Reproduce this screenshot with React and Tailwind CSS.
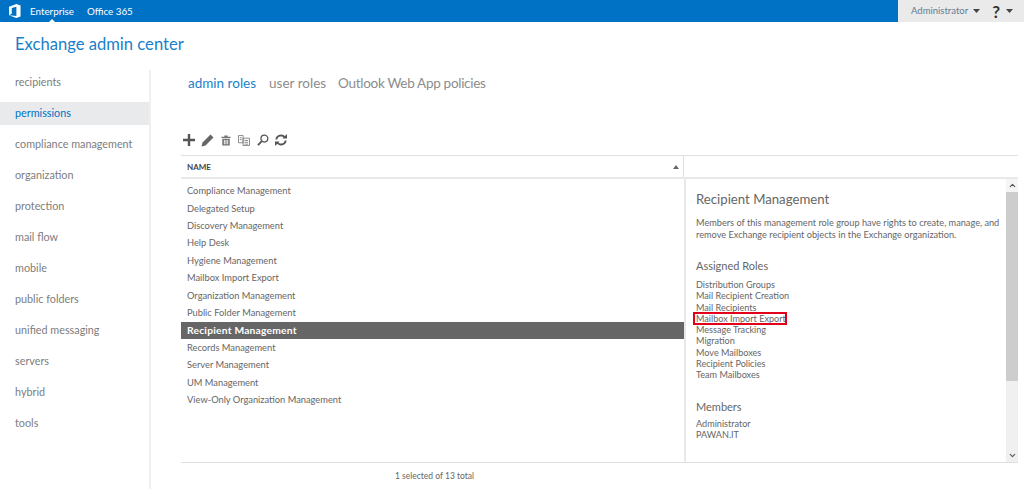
import React from 'react';
import { ChevronUp, ChevronDown } from 'lucide-react';

const navItems = [
  'recipients', 'permissions', 'compliance management', 'organization', 'protection', 'mail flow',
  'mobile', 'public folders', 'unified messaging', 'servers', 'hybrid', 'tools',
];

const roleGroups = [
  'Compliance Management', 'Delegated Setup', 'Discovery Management', 'Help Desk', 'Hygiene Management',
  'Mailbox Import Export', 'Organization Management', 'Public Folder Management', 'Recipient Management',
  'Records Management', 'Server Management', 'UM Management', 'View-Only Organization Management',
];

const assignedRoles = [
  'Distribution Groups', 'Mail Recipient Creation', 'Mail Recipients', 'Mailbox Import Export',
  'Message Tracking', 'Migration', 'Move Mailboxes', 'Recipient Policies', 'Team Mailboxes',
];

const Caret = ({ className }) => (
  <svg width="7" height="4" viewBox="0 0 7 4" className={className}>
    <path d="M0 0h7L3.5 4z" fill="currentColor" />
  </svg>
);

const Toolbar = () => (
  <div className="h-[30px] flex items-center gap-[6px] pl-[2px] text-[#555]">
    {/* add */}
    <svg width="12" height="12" viewBox="0 0 12 12"><path d="M4.8 0h2.4v4.8H12v2.4H7.2V12H4.8V7.2H0V4.8h4.8z" fill="currentColor" /></svg>
    {/* edit */}
    <svg width="13" height="13" viewBox="0 0 13 13" className="text-[#666]"><path d="M9.5 0.5l3 3-8 8-4 1 1-4z" fill="currentColor" /></svg>
    {/* delete */}
    <svg width="10" height="11" viewBox="0 0 12 12" className="ml-[1px] text-[#777]"><path d="M4 0h4v1.5h3.5V3H.5V1.5H4zM1.500 4h9v8h-9zM3.500 5.500v5h1v-5zM5.500 5.500v5h1v-5zM7.500 5.500v5h1v-5z" fill="currentColor" fillRule="evenodd" /></svg>
    {/* copy */}
    <svg width="12" height="11" viewBox="0 0 13 12" fill="none" stroke="currentColor" strokeWidth="0.9" className="ml-[1px] text-[#777]"><path d="M.5.5h5v8h-5zM5.500 3.500h7v8h-7zM2 3h2M2 5h2M7 6h4M7 8h4M7 10h4" /></svg>
    {/* search */}
    <svg width="12" height="12" viewBox="0 0 13 13" fill="none" stroke="currentColor" className="ml-[1px]"><circle cx="8" cy="5" r="3.7" strokeWidth="1.4" /><path d="M5 8l-4 4" strokeWidth="2" /></svg>
    {/* refresh */}
    <svg width="12" height="12" viewBox="0 0 13 13" fill="none" stroke="currentColor" strokeWidth="2"><path d="M1.500 6A5 4.600 0 0 1 10.500 3.500M11.500 7A5 4.600 0 0 1 2.500 9.500" /><path d="M8 5h5V0zM5 8H0v5z" fill="currentColor" stroke="none" /></svg>
  </div>
);

const App = () => {
  return (
    <div className="w-[1024px] h-[500px] overflow-hidden bg-white text-[#666] font-['Lato','Open_Sans',sans-serif]">
      {/* Top bar */}
      <div className="h-[22px] flex bg-[#0072c6] text-white text-[9.800px]">
        <div className="w-[30px] flex items-center justify-center">
          <svg width="12" height="14" viewBox="0 0 13 15"><path d="M0 3L8 0l4.500 1.500v12L8 15l-8-3 8 1V3L3 4.200v6.300L0 12z" fill="#fff" /></svg>
        </div>
        <div className="relative flex items-center">
          Enterprise
          <span className="absolute bottom-0 left-[19px] border-x-[3px] border-b-[3px] border-x-transparent border-b-white" />
        </div>
        <div className="flex items-center ml-[13px]">Office 365</div>
        <div className="ml-auto w-[126px] bg-[#eaeaea] flex items-center pl-[13px] text-[9.500px] text-[#5f7d95]">
          <span>Administrator</span>
          <Caret className="ml-[5px] text-[#444]" />
          <span className="ml-[12px] text-[17px] font-bold leading-none text-[#333]">?</span>
          <Caret className="ml-[6px] text-[#444]" />
        </div>
      </div>

      <h1 className="h-[48px] pl-[15px] pt-[10px] text-[16.600px] leading-[24px] text-[#1a7fcb]">Exchange admin center</h1>

      <div className="flex h-[419px]">
        {/* Left nav */}
        <div className="w-[151px] shrink-0 pt-[1px] border-r-2 border-[#f0f0f0] text-[10.800px] text-[#7d7d7d]">
          {navItems.map((item) => (
            <div
              key={item}
              className={`h-[23px] mb-[8px] pl-[15px] flex items-center whitespace-nowrap ${item === 'permissions' ? 'bg-[#e9eaec] text-[#0072c6] w-[149px]' : ''}`}
            >
              {item}
            </div>
          ))}
        </div>

        {/* Main */}
        <div className="flex-1 min-w-0 pl-[30px] pr-[6px]">
          <div className="flex gap-[13px] pl-[7px] pt-[1px] h-[55px] text-[13.500px] leading-[24px] text-[#8c8c8c]">
            <span className="text-[#1a7fcb]">admin roles</span>
            <span>user roles</span>
            <span className="tracking-[-0.300px] ml-[-1px]">Outlook Web App policies</span>
          </div>

          <Toolbar />

          <div className="border-y border-[#dde1e4] h-[308px] flex flex-col">
            <div className="h-[23px] shrink-0 flex border-b-2 border-[#e6e8ea]">
              <div className="w-[503px] flex items-center justify-between pl-[6px] pr-[4px] border-r border-[#dde1e4]">
                <span className="text-[8px] font-bold text-[#444]">NAME</span>
                <span className="border-x-[3px] border-b-[4px] border-x-transparent border-b-[#666]" />
              </div>
            </div>

            <div className="flex flex-1 min-h-0">
              {/* Role group list */}
              <div className="w-[503px] pt-[3.600px] text-[9.300px]">
                {roleGroups.map((name) => (
                  <div
                    key={name}
                    className={`h-[17.400px] pl-[6px] flex items-center ${name === 'Recipient Management' ? 'bg-[#666] text-white font-bold text-[10.300px] tracking-[0.200px]' : ''}`}
                  >
                    {name}
                  </div>
                ))}
              </div>

              {/* Details pane */}
              <div className="flex-1 flex border-l-2 border-[#e6e8ea] min-w-0">
                <div className="flex-1 pl-[10px] pr-[4px] text-[9.100px] leading-[11.300px]">
                  <h2 className="mt-[11px] text-[13.200px] leading-[18px]">Recipient Management</h2>
                  <p className="mt-[9px] text-[9.200px] leading-[11.500px]">
                    Members of this management role group have rights to create, manage, and remove Exchange recipient objects in the Exchange organization.
                  </p>
                  <h3 className="mt-[18px] text-[11px] leading-[16px]">Assigned Roles</h3>
                  <ul className="mt-[5px]">
                    {assignedRoles.map((role) => (
                      <li key={role} className="relative">
                        {role}
                        {role === 'Mailbox Import Export' && (
                          <span className="absolute left-[-3px] top-[-1px] w-[94px] h-[13px] border-2 border-[#e2001a]" />
                        )}
                      </li>
                    ))}
                  </ul>
                  <h3 className="mt-[18px] text-[11px] leading-[16px]">Members</h3>
                  <ul className="mt-[3px]">
                    <li>Administrator</li>
                    <li>PAWAN.IT</li>
                  </ul>
                </div>

                {/* Scrollbar */}
                <div className="w-[12px] shrink-0 flex flex-col bg-[#f0f0f0]">
                  <div className="h-[13px] flex items-center justify-center bg-[#f5f5f5]">
                    <ChevronUp size={9} strokeWidth={3} className="text-[#555]" />
                  </div>
                  <div className="h-[189px] bg-[#cdcdcd]" />
                  <div className="flex-1" />
                  <div className="h-[13px] flex items-center justify-center">
                    <ChevronDown size={9} strokeWidth={3} className="text-[#555]" />
                  </div>
                </div>
              </div>
            </div>
          </div>

          <div className="w-[503px] pl-[4px] pt-[7px] text-center text-[8.500px]">1 selected of 13 total</div>
        </div>
      </div>
    </div>
  );
};

export default App;
